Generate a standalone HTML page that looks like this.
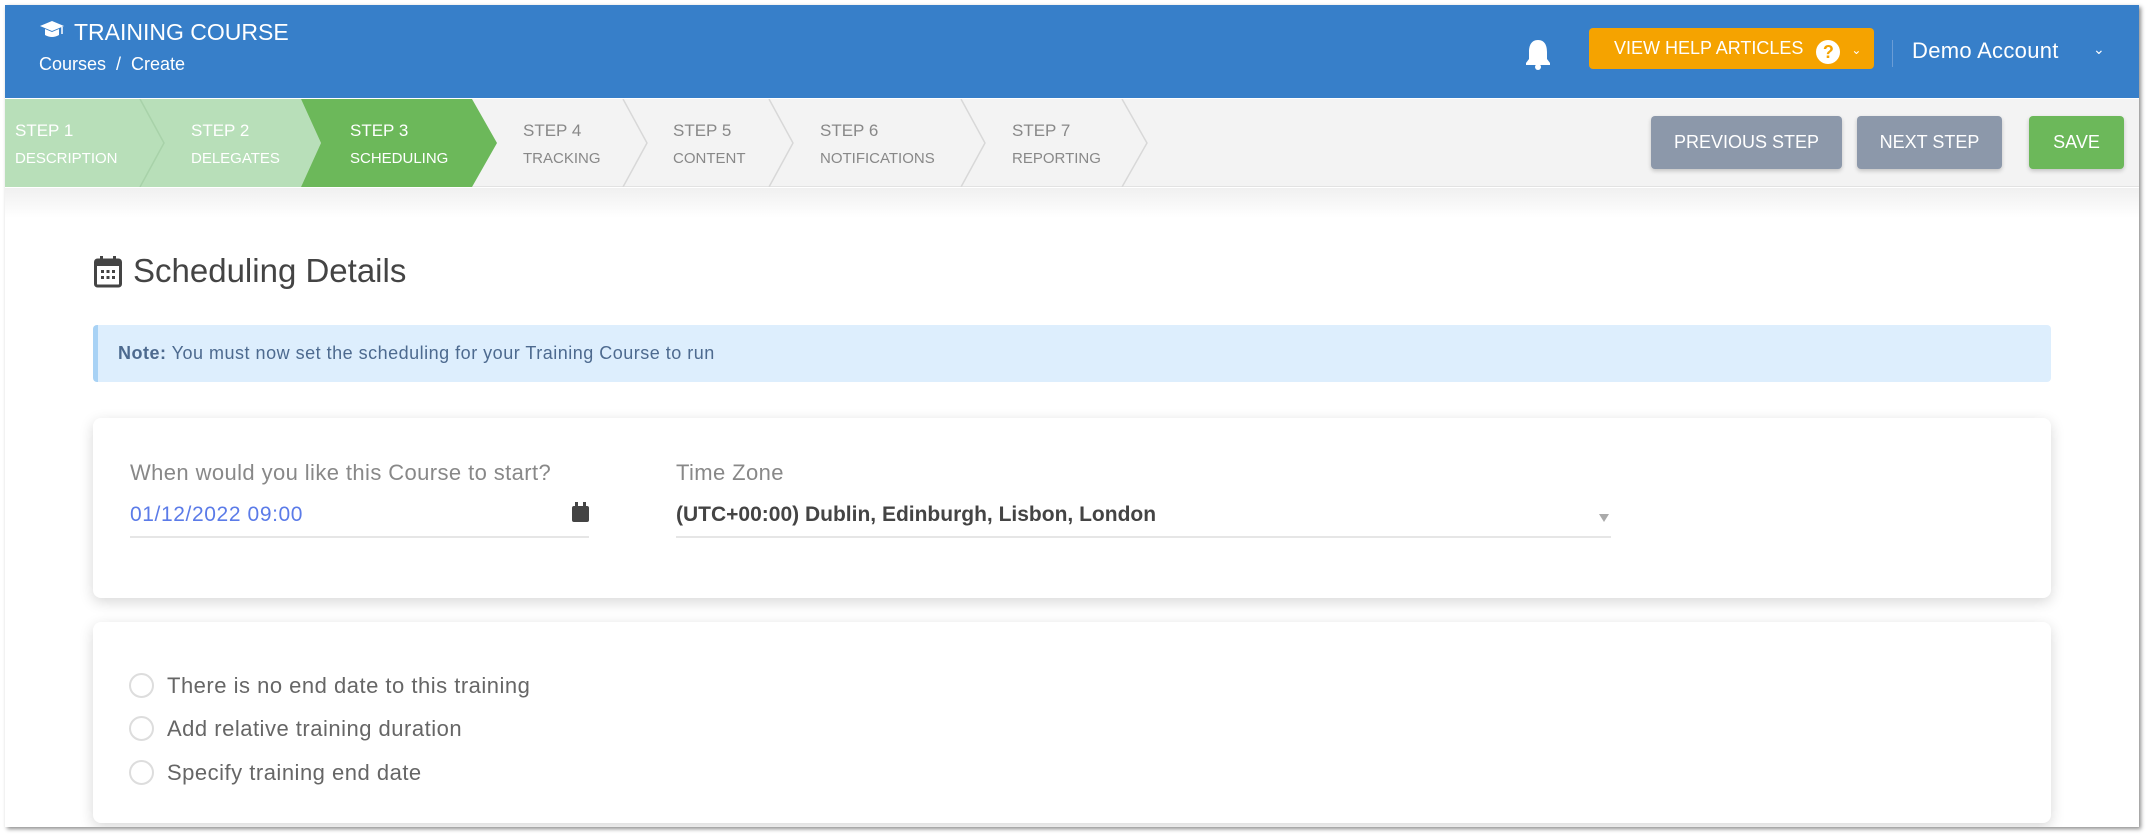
<!DOCTYPE html>
<html><head><meta charset="utf-8"><style>
*{margin:0;padding:0;box-sizing:border-box}
body{width:2147px;height:836px;background:#fff;font-family:"Liberation Sans",sans-serif;position:relative;overflow:hidden}
.frame{position:absolute;left:5px;top:5px;width:2134px;height:822px;background:#fff;box-shadow:2px 2px 4px rgba(0,0,0,.45);overflow:hidden}
.hdr{position:absolute;left:0;top:0;width:100%;height:93px;background:#377fc9;color:#fff}
.abs{position:absolute;white-space:nowrap}
.steps{position:absolute;left:0;top:94px;width:100%;height:88px;background:#f3f3f3;border-bottom:1px solid #e2e2e2}
.st{position:absolute;font-size:17px;line-height:20px}
.st .s{font-size:15px;display:block;margin-top:8px}
.btn{position:absolute;top:111px;height:53px;border-radius:4px;color:#fff;font-size:18px;line-height:53px;text-align:center;box-shadow:0 2px 4px rgba(0,0,0,.2)}
.card{position:absolute;left:88px;width:1958px;background:#fff;border-radius:8px;box-shadow:0 4px 14px rgba(0,0,0,.16)}
.radio{position:absolute;left:124px;width:25px;height:25px;border:2px solid #ddd;border-radius:50%}
.rl{position:absolute;left:162px;font-size:22px;letter-spacing:.5px;color:#666;line-height:26px}
</style></head><body>
<div class="frame">
 <div class="hdr">
  <svg class="abs" style="left:34px;top:15px" width="26" height="20" viewBox="0 0 26 20"><path d="M13 1 L25 6 L13 11 L1 6Z" fill="#fff"/><path d="M6 9 V15 Q13 19 20 15 V9 L13 12Z" fill="#fff"/><path d="M23 7 V14" stroke="#fff" stroke-width="1.5"/></svg>
  <div class="abs" style="left:69px;top:13px;font-size:23px;line-height:28px">TRAINING COURSE</div>
  <div class="abs" style="left:34px;top:48px;font-size:18px;line-height:22px">Courses &nbsp;/&nbsp; Create</div>
  <svg class="abs" style="left:1519px;top:33px" width="28" height="34" viewBox="0 0 28 34"><path d="M14 2 C7 2 5 8 5 14 V21 L2 25 V27 H26 V25 L23 21 V14 C23 8 21 2 14 2Z" fill="#fff"/><circle cx="14" cy="29" r="3" fill="#fff"/></svg>
  <div class="abs" style="left:1584px;top:23px;width:285px;height:41px;background:#f5a300;border-radius:4px;font-size:18px;line-height:41px;padding-left:25px">VIEW HELP ARTICLES
   <span style="display:inline-block;width:24px;height:24px;border-radius:50%;background:#fff;color:#f5a300;font-weight:bold;text-align:center;line-height:24px;font-size:18px;margin-left:8px;vertical-align:-4px">?</span>
   <span style="font-size:12px;margin-left:6px">&#8964;</span></div>
  <div class="abs" style="left:1887px;top:35px;width:1px;height:27px;background:#6a9dd6"></div>
  <div class="abs" style="left:1907px;top:32px;font-size:22px;letter-spacing:.3px;line-height:28px">Demo Account</div>
  <div class="abs" style="left:2088px;top:36px;font-size:14px">&#8964;</div>
 </div>
 <div class="steps">
  <svg class="abs" style="left:0;top:0" width="1160" height="88" viewBox="0 0 1160 88">
   <path d="M0 0 H296 L316 44 L296 88 H0Z" fill="#b8dfb9"/>
   <path d="M135 0 L159 44 L135 88" fill="none" stroke="#a8d2a9" stroke-width="1.5"/>
   <path d="M296 0 H467 L492 44 L467 88 H296 L316 44Z" fill="#6cb85a"/>
   <path d="M618 0 L642 44 L618 88 M764 0 L788 44 L764 88 M956 0 L980 44 L956 88 M1117 0 L1142 44 L1117 88" fill="none" stroke="#d8d8d8" stroke-width="1.5"/>
  </svg>
  <div class="st" style="left:10px;top:22px;color:#fff">STEP 1<span class="s">DESCRIPTION</span></div>
  <div class="st" style="left:186px;top:22px;color:#fff">STEP 2<span class="s">DELEGATES</span></div>
  <div class="st" style="left:345px;top:22px;color:#fff">STEP 3<span class="s">SCHEDULING</span></div>
  <div class="st" style="left:518px;top:22px;color:#888">STEP 4<span class="s">TRACKING</span></div>
  <div class="st" style="left:668px;top:22px;color:#888">STEP 5<span class="s">CONTENT</span></div>
  <div class="st" style="left:815px;top:22px;color:#888">STEP 6<span class="s">NOTIFICATIONS</span></div>
  <div class="st" style="left:1007px;top:22px;color:#888">STEP 7<span class="s">REPORTING</span></div>
 </div>
 <div class="btn" style="left:1646px;width:191px;background:#8c98aa">PREVIOUS STEP</div>
 <div class="btn" style="left:1852px;width:145px;background:#8c98aa">NEXT STEP</div>
 <div class="btn" style="left:2024px;width:95px;background:#6cb85a">SAVE</div>
 <div class="abs" style="left:0;top:183px;width:100%;height:30px;background:linear-gradient(#f0f0f0,#fff)"></div>
 <svg class="abs" style="left:89px;top:250px" width="28" height="33" viewBox="0 0 28 33"><rect x="1.5" y="5" width="25" height="26" rx="2" fill="none" stroke="#444" stroke-width="3"/><rect x="1.5" y="5" width="25" height="6" fill="#444"/><rect x="6" y="1" width="3" height="7" fill="#444"/><rect x="19" y="1" width="3" height="7" fill="#444"/><g fill="#444"><rect x="7" y="15" width="3" height="3"/><rect x="12.5" y="15" width="3" height="3"/><rect x="18" y="15" width="3" height="3"/><rect x="7" y="21" width="3" height="3"/><rect x="12.5" y="21" width="3" height="3"/><rect x="18" y="21" width="3" height="3"/></g></svg>
 <div class="abs" style="left:128px;top:247px;font-size:33px;line-height:38px;color:#444">Scheduling Details</div>
 <div class="abs" style="left:88px;top:320px;width:1958px;height:57px;background:#ddeefd;border-left:5px solid #a8d2f5;border-radius:4px;font-size:18px;letter-spacing:.5px;line-height:57px;padding-left:20px;color:#4d6a8f"><b>Note:</b> You must now set the scheduling for your Training Course to run</div>
 <div class="card" style="top:413px;height:180px">
  <div class="abs" style="left:37px;top:42px;font-size:22px;letter-spacing:.4px;color:#888">When would you like this Course to start?</div>
  <div class="abs" style="left:37px;top:85px;font-size:21px;letter-spacing:.6px;color:#5b7be8">01/12/2022 09:00</div>
  <svg class="abs" style="left:478px;top:83px" width="19" height="22" viewBox="0 0 19 22"><rect x="1" y="5" width="17" height="16" rx="2" fill="#444"/><rect x="4" y="1" width="3" height="5" fill="#444"/><rect x="12" y="1" width="3" height="5" fill="#444"/></svg>
  <div class="abs" style="left:37px;top:118px;width:459px;height:2px;background:#e6e6e6"></div>
  <div class="abs" style="left:583px;top:42px;font-size:22px;letter-spacing:.4px;color:#888">Time Zone</div>
  <div class="abs" style="left:583px;top:85px;font-size:21px;color:#444;font-weight:bold">(UTC+00:00) Dublin, Edinburgh, Lisbon, London</div>
  <div class="abs" style="left:1506px;top:96px;width:0;height:0;border-left:5px solid transparent;border-right:5px solid transparent;border-top:8px solid #aaa"></div>
  <div class="abs" style="left:583px;top:118px;width:935px;height:2px;background:#e6e6e6"></div>
 </div>
 <div class="card" style="top:617px;height:201px">
 </div>
 <div class="radio" style="top:668px"></div><div class="rl" style="top:668px">There is no end date to this training</div>
 <div class="radio" style="top:711px"></div><div class="rl" style="top:711px">Add relative training duration</div>
 <div class="radio" style="top:755px"></div><div class="rl" style="top:755px">Specify training end date</div>
</div>
</body></html>
